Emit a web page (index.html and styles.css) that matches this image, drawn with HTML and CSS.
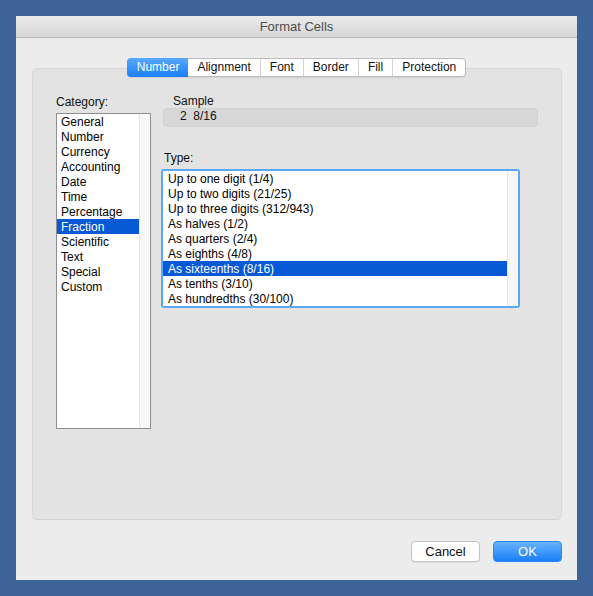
FILE: index.html
```html
<!DOCTYPE html>
<html>
<head>
<meta charset="utf-8">
<title>Format Cells</title>
<link rel="stylesheet" href="styles.css">
</head>
<body>
<div class="window">
  <div class="titlebar">Format Cells</div>
  <div class="tabs">
    <div class="tab tab-active">Number</div>
    <div class="tab">Alignment</div>
    <div class="tab">Font</div>
    <div class="tab">Border</div>
    <div class="tab">Fill</div>
    <div class="tab">Protection</div>
  </div>
  <div class="panel">
    <div class="col-left">
      <div class="label">Category:</div>
      <div class="listbox category">
        <div class="items">
          <div class="item">General</div>
          <div class="item">Number</div>
          <div class="item">Currency</div>
          <div class="item">Accounting</div>
          <div class="item">Date</div>
          <div class="item">Time</div>
          <div class="item">Percentage</div>
          <div class="item selected">Fraction</div>
          <div class="item">Scientific</div>
          <div class="item">Text</div>
          <div class="item">Special</div>
          <div class="item">Custom</div>
        </div>
        <div class="scrolltrack"></div>
      </div>
    </div>
    <div class="col-right">
      <div class="label sample-label">Sample</div>
      <div class="sample">2&nbsp;&nbsp;8/16</div>
      <div class="label type-label">Type:</div>
      <div class="listbox typelist">
        <div class="items">
          <div class="item type-item">Up to one digit (1/4)</div>
          <div class="item type-item">Up to two digits (21/25)</div>
          <div class="item type-item">Up to three digits (312/943)</div>
          <div class="item type-item">As halves (1/2)</div>
          <div class="item type-item">As quarters (2/4)</div>
          <div class="item type-item">As eighths (4/8)</div>
          <div class="item type-item selected">As sixteenths (8/16)</div>
          <div class="item type-item">As tenths (3/10)</div>
          <div class="item type-item">As hundredths (30/100)</div>
        </div>
        <div class="scrolltrack"></div>
      </div>
    </div>
  </div>
  <div class="buttons">
    <button class="btn btn-cancel">Cancel</button>
    <button class="btn btn-ok">OK</button>
  </div>
</div>
</body>
</html>
```
FILE: styles.css
```css
html, body {
  margin: 0;
  padding: 0;
}
body {
  background: #3d6399;
  width: 593px;
  height: 596px;
  overflow: hidden;
  font-family: "Liberation Sans", Arial, sans-serif;
  font-size: 12px;
  color: #000;
}
.window {
  margin: 16px 0 0 16px;
  width: 561px;
  height: 564px;
  background: #ececec;
  box-sizing: border-box;
  padding: 0 15px 0 16px;
  display: flex;
  flex-direction: column;
}
.titlebar {
  margin: 0 -15px 0 -16px;
  height: 21px;
  line-height: 21px;
  background: linear-gradient(#ebebeb, #d6d6d6);
  border-bottom: 1px solid #bdbdbd;
  text-align: center;
  font-size: 13px;
  color: #4d4d4d;
}
.tabs {
  margin-top: 20px;
  align-self: center;
  display: flex;
  height: 19px;
  box-sizing: border-box;
  background: #fff;
  border: 1px solid #bcbcbc;
  border-radius: 4px;
  box-shadow: 0 1px 1px rgba(0,0,0,0.08);
  position: relative;
  z-index: 1;
  margin-left: -1px;
}
.tab {
  padding: 0 9px;
  line-height: 17px;
  border-left: 1px solid #d4d4d4;
  color: #111;
}
.tab:first-child {
  border-left: none;
}
.tab-active {
  margin: -1px 0 -1px -1px;
  padding: 0 9px 0 10px;
  line-height: 19px;
  background: linear-gradient(#58a9fc, #1b7ef8);
  color: #fff;
  border-radius: 4px 0 0 4px;
}
.tab-active + .tab {
  border-left: none;
}
.panel {
  margin-top: -9px;
  height: 452px;
  box-sizing: border-box;
  background: #e3e3e3;
  border: 1px solid #d9d9d9;
  border-bottom-color: #d2d2d2;
  border-radius: 5px;
  padding: 25px 0 0 23px;
  display: flex;
  align-items: flex-start;
}
.label {
  padding-top: 1px;
  line-height: 14px;
  color: #111;
}
.col-left {
  width: 95px;
  display: flex;
  flex-direction: column;
}
.col-left .label {
  margin-bottom: 4px;
}
.listbox {
  display: flex;
  background: #fff;
  box-sizing: border-box;
}
.category {
  height: 316px;
  border: 1px solid #8f8f8f;
}
.items {
  flex: 1;
  display: flex;
  flex-direction: column;
}
.item {
  height: 15px;
  box-sizing: border-box;
  padding-top: 1px;
  line-height: 15px;
  padding-left: 4px;
  white-space: nowrap;
}
.selected {
  background: #0759d5;
  color: #fff;
}
.scrolltrack {
  width: 10px;
  background: #f8f8f8;
  border-left: 1px solid #e6e6e6;
}
.col-right {
  margin-left: 10px;
  display: flex;
  flex-direction: column;
}
.sample-label {
  padding-left: 12px;
  line-height: 13px;
}
.sample {
  margin-left: 2px;
  width: 375px;
  height: 19px;
  box-sizing: border-box;
  background: #d7d7d7;
  border: 1px solid #d0d0d0;
  border-radius: 4px;
  padding: 0 0 2px 16px;
  line-height: 15px;
  color: #111;
}
.type-label {
  margin-top: 24px;
  padding-left: 3px;
  line-height: 13px;
  margin-bottom: 4px;
}
.typelist {
  width: 359px;
  height: 139px;
  border: 2px solid #5ba8f6;
  border-radius: 3px;
}
.type-item {
  padding-left: 5px;
}
.buttons {
  margin-top: 21px;
  display: flex;
  justify-content: flex-end;
  gap: 13px;
}
.btn {
  width: 69px;
  height: 21px;
  box-sizing: border-box;
  font-family: "Liberation Sans", Arial, sans-serif;
  font-size: 13px;
  line-height: 19px;
  padding: 0;
  border-radius: 4px;
  cursor: default;
}
.btn-cancel {
  background: #fff;
  border: 1px solid #c3c3c3;
  color: #111;
  box-shadow: 0 1px 0 rgba(0,0,0,0.05);
}
.btn-ok {
  background: linear-gradient(#69b3fd, #1a80f8);
  border: 1px solid #2a86f5;
  color: #fff;
}
```
